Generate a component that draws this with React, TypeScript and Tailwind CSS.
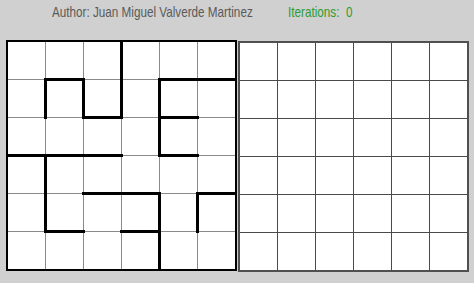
const SIZE = 6;
const cells = Array.from({ length: SIZE * SIZE }, (_, i) => i);

// maze walls on the left board, in grid units
const vWalls: [number, number, number][] = [
  [3, 0, 2],
  [1, 1, 2],
  [2, 1, 2],
  [4, 1, 3],
  [1, 3, 5],
  [4, 4, 6],
  [5, 4, 5],
];
const hWalls: [number, number, number][] = [
  [1, 1, 2],
  [2, 2, 3],
  [1, 4, 6],
  [2, 4, 5],
  [3, 4, 5],
  [3, 0, 3],
  [4, 2, 4],
  [5, 1, 2],
  [5, 3, 4],
  [4, 5, 6],
];

// pixel centre of grid line k (2px border, 37px cells, 1px gaps)
const line = (k: number) => (k === 0 ? 1 : k === SIZE ? 230 : 38 * k + 1.5);

function MazeBoard() {
  return (
    <div className="relative">
      <div className="grid grid-cols-[repeat(6,37px)] grid-rows-[repeat(6,37px)] gap-px bg-[#8a8a8a] border-2 border-black">
        {cells.map((i) => (
          <div key={i} className="bg-white" />
        ))}
      </div>
      <svg className="absolute inset-0" width={231} height={231} viewBox="0 0 231 231">
        <g stroke="#000" strokeWidth={3} strokeLinecap="square">
          {vWalls.map(([x, y1, y2], i) => (
            <line key={`v${i}`} x1={line(x)} x2={line(x)} y1={line(y1)} y2={line(y2)} />
          ))}
          {hWalls.map(([y, x1, x2], i) => (
            <line key={`h${i}`} y1={line(y)} y2={line(y)} x1={line(x1)} x2={line(x2)} />
          ))}
        </g>
      </svg>
    </div>
  );
}

function EmptyBoard() {
  return (
    <div className="mt-px grid grid-cols-[repeat(6,37px)] grid-rows-[repeat(6,37px)] gap-px bg-[#4a4a4a] border-2 border-[#505050]">
      {cells.map((i) => (
        <div key={i} className="bg-white" />
      ))}
    </div>
  );
}

export default function App() {
  return (
    <div className="w-[474px] h-[283px] bg-[#d0d0d0] overflow-hidden font-['Liberation_Sans',Arial,sans-serif]">
      {/* HEADER - narrow font look */}
      <div className="h-10 pl-[52px] pt-1 flex items-start text-[15px] leading-none whitespace-nowrap">
        <span className="w-[201px] text-[#5a5a5a]">
          <span className="inline-block origin-left scale-x-[0.78]">Author: Juan Miguel Valverde Martinez</span>
        </span>
        <span className="ml-[35px] w-[65px] text-[#2f9a2f]">
          <span className="inline-block origin-left scale-x-[0.78] whitespace-pre">Iterations:  0</span>
        </span>
      </div>

      {/* BOARDS */}
      <div className="pl-[6px] flex items-start gap-px">
        <MazeBoard />
        <EmptyBoard />
      </div>
    </div>
  );
}
